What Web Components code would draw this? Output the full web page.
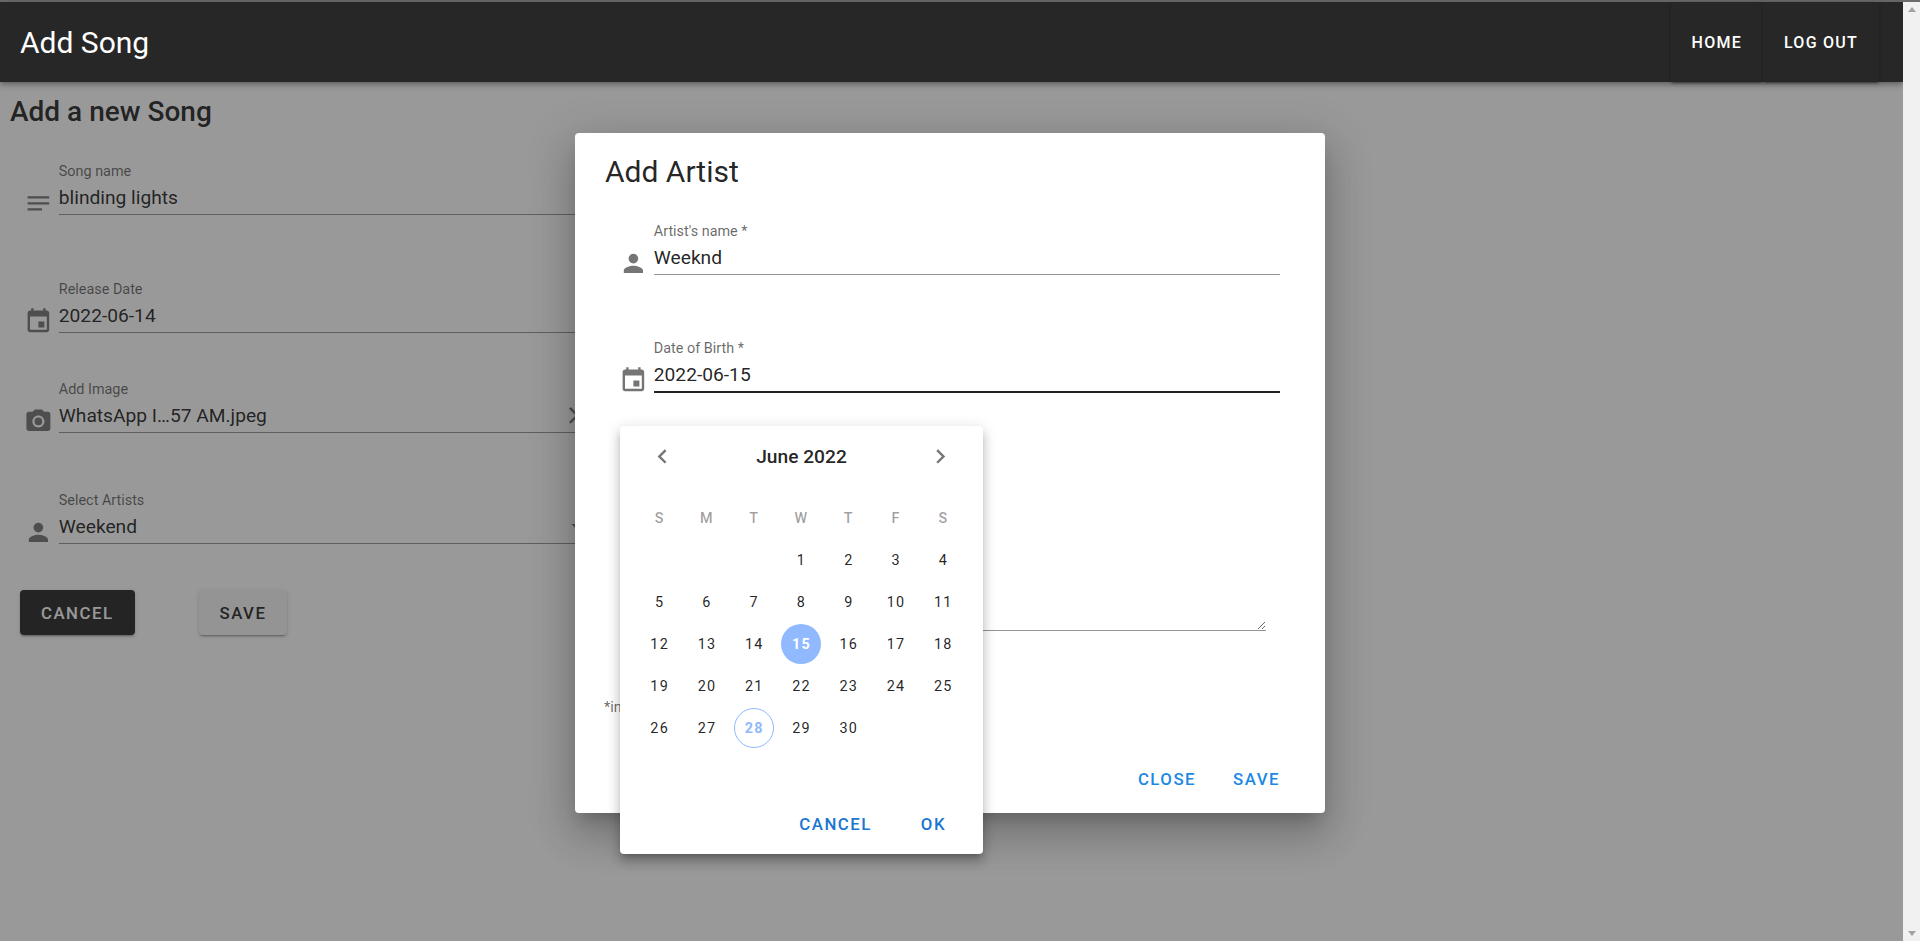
<!DOCTYPE html>
<html lang="en">
<head>
<meta charset="utf-8">
<title>Add Song</title>
<style>
  html, body { margin: 0; height: 100%; overflow: hidden; }
  body { font-family: Roboto, "Liberation Sans", sans-serif; }
</style>
</head>
<body>
<app-shell>
  <app-bar slot="bar" title="Add Song">
    <nav-button>Home</nav-button>
    <nav-button>Log out</nav-button>
  </app-bar>
  <song-form></song-form>
  <artist-dialog slot="modal"></artist-dialog>
</app-shell>

<script>
const ICONS = {
  notes: 'M3 18h12v-2H3v2zM3 6v2h18V6H3zm0 7h18v-2H3v2z',
  event: 'M17 12h-5v5h5v-5zM16 1v2H8V1H6v2H5c-1.11 0-1.99.9-1.99 2L3 19c0 1.1.89 2 2 2h14c1.1 0 2-.9 2-2V5c0-1.1-.9-2-2-2h-1V1h-2zm3 18H5V8h14v11z',
  camera: 'M12 15.2a3.2 3.2 0 1 0 0-6.4 3.2 3.2 0 0 0 0 6.4zM9 2L7.17 4H4c-1.1 0-2 .9-2 2v12c0 1.1.9 2 2 2h16c1.1 0 2-.9 2-2V6c0-1.1-.9-2-2-2h-3.17L15 2H9zm3 15c-2.76 0-5-2.24-5-5s2.24-5 5-5 5 2.24 5 5-2.24 5-5 5z',
  person: 'M12 12c2.21 0 4-1.79 4-4s-1.79-4-4-4-4 1.79-4 4 1.79 4 4 4zm0 2c-2.67 0-8 1.34-8 4v2h16v-2c0-2.66-5.33-4-8-4z',
  close: 'M19 6.41L17.59 5 12 10.59 6.41 5 5 6.41 10.59 12 5 17.59 6.41 19 12 13.41 17.59 19 19 17.59 13.41 12z',
  drop: 'M7 10l5 5 5-5z',
  left: 'M15.41 7.41L14 6l-6 6 6 6 1.41-1.41L10.83 12z',
  right: 'M10 6L8.59 7.41 13.17 12l-4.58 4.59L10 18l6-6z'
}

class MdIcon extends HTMLElement {
  connectedCallback() {
    const name = this.getAttribute('name')
    this.attachShadow({mode: 'open'}).innerHTML = `
      <style>
        :host { display: inline-flex; width: 28.8px; height: 28.8px; flex: none; color: rgba(0,0,0,.54); }
        svg { width: 100%; height: 100%; fill: currentColor; }
      </style>
      <svg viewBox="0 0 24 24"><path d="${ICONS[name]}"/></svg>`
  }
}
customElements.define('md-icon', MdIcon)

const shellTemplate = document.createElement('template')
shellTemplate.innerHTML = `
  <style>
    :host { display: flex; height: 941px; position: relative; }
    .page { position: relative; flex: 1; min-width: 0; overflow: hidden; background: #fff; }
    .scrim { position: absolute; inset: 0; background: rgba(33,33,33,.46); }
    .scrollbar {
      width: 17px; flex: none; background: #f1f1f1;
      display: flex; flex-direction: column; justify-content: space-between; align-items: center;
      padding: 7px 0 5px; box-sizing: border-box;
    }
    .up, .down { width: 0; height: 0; border-left: 4.5px solid transparent; border-right: 4.5px solid transparent; }
    .up { border-bottom: 5px solid #a3a3a3; }
    .down { border-top: 5px solid #a3a3a3; }
    .edge { position: absolute; top: 0; left: 0; right: 0; height: 2px; background: #6b6b6b; }
  </style>
  <div class="page">
    <slot name="bar"></slot>
    <slot></slot>
    <div class="scrim"></div>
    <slot name="modal"></slot>
  </div>
  <div class="scrollbar"><span class="up"></span><span class="down"></span></div>
  <div class="edge"></div>
`
class AppShell extends HTMLElement {
  constructor() {
    super()
    this.attachShadow({mode: 'open'})
    this.shadowRoot.appendChild(shellTemplate.content.cloneNode(true))
  }
}
customElements.define('app-shell', AppShell)

const barTemplate = document.createElement('template')
barTemplate.innerHTML = `
  <style>
    :host {
      display: flex; align-items: center; height: 80px; margin-top: 2px; padding: 0 24px 0 20px;
      background: #272727; color: #fff; position: relative; z-index: 1;
      box-shadow: 0 2px 4px -1px rgba(0,0,0,.2), 0 4px 5px rgba(0,0,0,.14), 0 1px 10px rgba(0,0,0,.12);
    }
    h1 { margin: 0; font-size: 30px; font-weight: 400; letter-spacing: 0; }
    nav { margin-left: auto; display: flex; height: 100%; }
  </style>
  <h1></h1>
  <nav><slot></slot></nav>
`
class AppBar extends HTMLElement {
  constructor() {
    super()
    this.attachShadow({mode: 'open'})
    this.shadowRoot.appendChild(barTemplate.content.cloneNode(true))
    this.shadowRoot.querySelector('h1').textContent = this.getAttribute('title')
  }
}
customElements.define('app-bar', AppBar)

const navTemplate = document.createElement('template')
navTemplate.innerHTML = `
  <style>
    :host {
      display: flex; align-items: center; height: 100%; padding: 0 21px; background: #272727;
      font-size: 16px; font-weight: 500; letter-spacing: 1.25px; text-transform: uppercase; color: #fff;
      box-shadow: 0 3px 1px -2px rgba(0,0,0,.2), 0 2px 2px rgba(0,0,0,.14), 0 1px 5px rgba(0,0,0,.12);
    }
  </style>
  <slot></slot>
`
class NavButton extends HTMLElement {
  constructor() {
    super()
    this.attachShadow({mode: 'open'})
    this.shadowRoot.appendChild(navTemplate.content.cloneNode(true))
  }
}
customElements.define('nav-button', NavButton)

const fieldTemplate = document.createElement('template')
fieldTemplate.innerHTML = `
  <style>
    :host { display: flex; align-items: flex-start; }
    .lead { width: 28.8px; margin: 0 6px 0 -1px; padding-top: var(--icon-top, 26px); flex: none; display: flex; }
    .box { flex: 1; min-width: 0; border-bottom: 1px solid rgba(0,0,0,.42); }
    :host([focused]) .box { border-bottom: 2px solid rgba(0,0,0,.87); }
    label { display: block; font-size: 14.4px; line-height: 17px; color: rgba(0,0,0,.6); }
    .row { display: flex; align-items: center; height: 33px; margin-top: 1px; }
    .value { flex: 1; font-size: 19.2px; color: rgba(0,0,0,.87); white-space: nowrap; }
  </style>
  <div class="lead"><slot name="icon"></slot></div>
  <div class="box">
    <label></label>
    <div class="row"><span class="value"></span><slot name="append"></slot></div>
  </div>
`
class TextField extends HTMLElement {
  constructor() {
    super()
    this.attachShadow({mode: 'open'})
    this.shadowRoot.appendChild(fieldTemplate.content.cloneNode(true))
    this.shadowRoot.querySelector('label').textContent = this.getAttribute('label')
    this.shadowRoot.querySelector('.value').textContent = this.getAttribute('value')
  }
}
customElements.define('text-field', TextField)

const btnTemplate = document.createElement('template')
btnTemplate.innerHTML = `
  <style>
    :host {
      display: inline-flex; align-items: center; justify-content: center; height: 45px; padding: 0 21px;
      border-radius: 4px; box-sizing: border-box; font-size: 16.8px; font-weight: 500; letter-spacing: 1.5px;
      text-transform: uppercase; color: rgba(0,0,0,.87); background: #f5f5f5;
      box-shadow: 0 3px 1px -2px rgba(0,0,0,.2), 0 2px 2px rgba(0,0,0,.14), 0 1px 5px rgba(0,0,0,.12);
    }
    :host([dark]) { background: #272727; color: #fff; }
    :host([text]) { background: none; box-shadow: none; height: auto; padding: 0; font-weight: 500; font-size: 16.8px; color: #1e88e5; }
    :host([text][deep]) { color: #1976d2; }
  </style>
  <slot></slot>
`
class XButton extends HTMLElement {
  constructor() {
    super()
    this.attachShadow({mode: 'open'})
    this.shadowRoot.appendChild(btnTemplate.content.cloneNode(true))
  }
}
customElements.define('x-button', XButton)

const formTemplate = document.createElement('template')
formTemplate.innerHTML = `
  <style>
    :host { display: block; padding: 0 0 0 10px; width: 582px; }
    h2 { margin: 0; padding-top: 12px; font-size: 28px; line-height: 36px; font-weight: 500; color: rgba(0,0,0,.87); }
    .fields { display: flex; flex-direction: column; padding-left: 15px; margin-top: 33px; }
    .actions { display: flex; gap: 64px; margin: 43px 0 0 10px; }
  </style>
  <h2>Add a new Song</h2>
  <div class="fields">
    <text-field label="Song name" value="blinding lights" style="margin-bottom:63px">
      <md-icon slot="icon" name="notes"></md-icon>
    </text-field>
    <text-field label="Release Date" value="2022-06-14" style="margin-bottom:45px">
      <md-icon slot="icon" name="event"></md-icon>
    </text-field>
    <text-field label="Add Image" value="WhatsApp I…57 AM.jpeg" style="margin-bottom:57px">
      <md-icon slot="icon" name="camera"></md-icon>
      <md-icon slot="append" name="close"></md-icon>
    </text-field>
    <text-field label="Select Artists" value="Weekend">
      <md-icon slot="icon" name="person"></md-icon>
      <md-icon slot="append" name="drop"></md-icon>
    </text-field>
  </div>
  <div class="actions">
    <x-button dark>Cancel</x-button>
    <x-button>Save</x-button>
  </div>
`
class SongForm extends HTMLElement {
  constructor() {
    super()
    this.attachShadow({mode: 'open'})
    this.shadowRoot.appendChild(formTemplate.content.cloneNode(true))
  }
}
customElements.define('song-form', SongForm)

const dialogTemplate = document.createElement('template')
dialogTemplate.innerHTML = `
  <style>
    :host {
      position: absolute; left: 575px; top: 133px; width: 750px; height: 680px; box-sizing: border-box;
      display: flex; flex-direction: column; background: #fff; border-radius: 4px; z-index: 2;
      box-shadow: 0 11px 15px -7px rgba(0,0,0,.2), 0 24px 38px 3px rgba(0,0,0,.14), 0 9px 46px 8px rgba(0,0,0,.12);
    }
    h3 { margin: 0; padding: 21px 30px 0; font-size: 30px; line-height: 36px; font-weight: 400; color: rgba(0,0,0,.87); }
    .body { padding: 33px 45px 0 45px; display: flex; flex-direction: column; }
    textarea {
      display: block; margin: 0 14px 0 41px; width: calc(100% - 55px); height: 100px; padding: 0; box-sizing: border-box;
      border: 0; border-bottom: 1px solid rgba(0,0,0,.42); outline: 0; background: none; font: inherit; resize: vertical;
    }
    small { position: absolute; left: 29px; top: 566px; font-size: 14.4px; color: rgba(0,0,0,.6); }
    .actions { margin-top: auto; padding: 0 45px 24px 0; display: flex; justify-content: flex-end; gap: 37px; }
  </style>
  <h3>Add Artist</h3>
  <div class="body">
    <text-field label="Artist's name *" value="Weeknd" style="margin-bottom:62px">
      <md-icon slot="icon" name="person"></md-icon>
    </text-field>
    <text-field focused label="Date of Birth *" value="2022-06-15" style="margin-bottom:136px">
      <md-icon slot="icon" name="event"></md-icon>
    </text-field>
    <textarea aria-label="Biography"></textarea>
  </div>
  <small>*indicates required field</small>
  <div class="actions">
    <x-button text>Close</x-button>
    <x-button text>Save</x-button>
  </div>
  <date-picker></date-picker>
`
class ArtistDialog extends HTMLElement {
  constructor() {
    super()
    this.attachShadow({mode: 'open'})
    this.shadowRoot.appendChild(dialogTemplate.content.cloneNode(true))
  }
}
customElements.define('artist-dialog', ArtistDialog)

const pickerTemplate = document.createElement('template')
pickerTemplate.innerHTML = `
  <style>
    :host {
      position: absolute; left: 45px; top: 293px; width: 363px; height: 428px; box-sizing: border-box;
      display: flex; flex-direction: column; padding: 0 16px; background: #fff; border-radius: 4px;
      box-shadow: 0 5px 5px -3px rgba(0,0,0,.2), 0 8px 10px 1px rgba(0,0,0,.14), 0 3px 14px 2px rgba(0,0,0,.12);
    }
    header { display: flex; align-items: center; justify-content: space-between; height: 60px; padding: 0 12px; }
    strong { font-size: 19.2px; font-weight: 500; color: rgba(0,0,0,.87); }
    .grid { display: grid; grid-template-columns: repeat(7, 1fr); grid-auto-rows: 42px; justify-items: center; align-items: center; font-size: 14.4px; letter-spacing: 1.2px; color: rgba(0,0,0,.87); margin-top: 11px; }
    .dow { color: rgba(0,0,0,.38); font-weight: 500; }
    .grid > div { height: 40px; width: 40px; display: flex; align-items: center; justify-content: center; border-radius: 50%; box-sizing: border-box; }
    .sel { background: #90b9ff; color: #fff; font-weight: 700; }
    .today { border: 1px solid #90b9ff; color: #90b9ff; font-weight: 700; }
    .actions { margin-top: auto; padding: 0 21px 20px 0; display: flex; justify-content: flex-end; gap: 49px; }
  </style>
  <header>
    <md-icon name="left"></md-icon>
    <strong>June 2022</strong>
    <md-icon name="right"></md-icon>
  </header>
  <div class="grid"></div>
  <div class="actions">
    <x-button text deep>Cancel</x-button>
    <x-button text deep>OK</x-button>
  </div>
`
class DatePicker extends HTMLElement {
  constructor() {
    super()
    this.attachShadow({mode: 'open'})
    this.shadowRoot.appendChild(pickerTemplate.content.cloneNode(true))
    const grid = this.shadowRoot.querySelector('.grid')
    const cell = (text, cls) => {
      const d = document.createElement('div')
      d.textContent = text
      if (cls) d.className = cls
      grid.appendChild(d)
    }
    for (const d of 'SMTWTFS') cell(d, 'dow')
    for (let i = 0; i < 3; i++) cell('')
    for (let day = 1; day <= 30; day++) {
      cell(day, day === 15 ? 'sel' : day === 28 ? 'today' : '')
    }
  }
}
customElements.define('date-picker', DatePicker)
</script>
</body>
</html>
